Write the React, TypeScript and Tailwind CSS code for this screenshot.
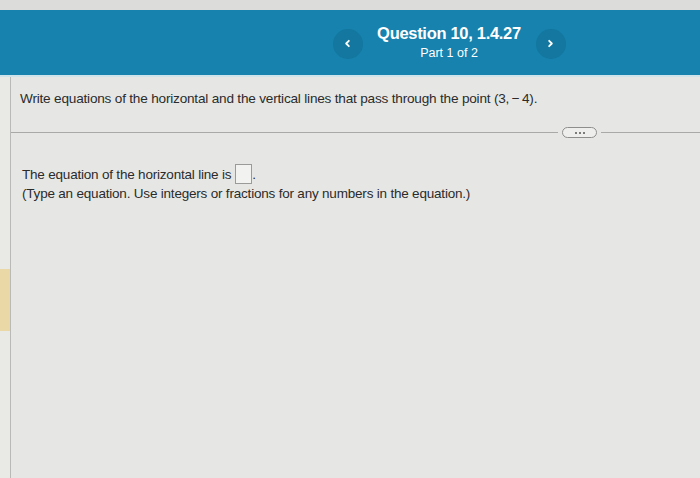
import React from 'react';

const App: React.FC = () => {
  return (
    <div
      className="w-[700px] h-[478px] overflow-hidden flex flex-col bg-[#e6e7e4] text-[#2b2b2b]"
      style={{ fontFamily: '"Liberation Sans", Arial, sans-serif' }}
    >
      {/* top strip */}
      <div className="h-[10px] bg-[#dcdddb]" />

      {/* header */}
      <header className="h-[65px] bg-[#1682ad] flex items-center justify-center relative">
        <div className="flex items-center gap-[13px] ml-[198px]">
          <button className="w-[30px] h-[30px] rounded-full bg-[#13779f] flex items-center justify-center text-white mt-[2px]">
            <svg width="9" height="9" viewBox="0 0 10 10" fill="none" stroke="white" strokeWidth="2" strokeLinecap="round" strokeLinejoin="round">
              <path d="M6.5 2 3.5 5l3 3" />
            </svg>
          </button>
          <div className="flex flex-col items-center text-white w-[147px]">
            <div className="text-[16.5px] font-bold tracking-[-0.3px] leading-[20px]">Question 10, 1.4.27</div>
            <div className="text-[12.5px] leading-[18px] mt-[1px]">Part 1 of 2</div>
          </div>
          <button className="w-[30px] h-[30px] rounded-full bg-[#13779f] flex items-center justify-center text-white mt-[2px]">
            <svg width="9" height="9" viewBox="0 0 10 10" fill="none" stroke="white" strokeWidth="2" strokeLinecap="round" strokeLinejoin="round">
              <path d="M3.5 2 6.5 5l-3 3" />
            </svg>
          </button>
        </div>
      </header>
      <div className="h-[2px] bg-[#cfe3ea]" />

      {/* body */}
      <div className="flex flex-1">
        <div className="w-[10px] flex flex-col bg-[#e9e9e6]">
          <div className="h-[192px]" />
          <div className="h-[62px] bg-[#ead9a6]" />
        </div>
        <div className="w-[1px] bg-[#b9bab8]" />
        <div className="flex-1 flex flex-col">
          <p className="text-[13.6px] tracking-[-0.2px] pl-[9px] pt-[12px] leading-[19px]">
            Write equations of the horizontal and the vertical lines that pass through the point (3,&thinsp;&minus;&thinsp;4).
          </p>
          <div className="flex items-center mt-[19px]">
            <div className="w-[547px] h-[1px] bg-[#a9aaa8]" />
            <div className="mx-[4px] w-[35px] h-[11px] rounded-full border border-[#8e8f8d] bg-[#eeeeec] flex items-center justify-center gap-[2px]">
              <span className="w-[2px] h-[2px] rounded-full bg-[#555]" />
              <span className="w-[2px] h-[2px] rounded-full bg-[#555]" />
              <span className="w-[2px] h-[2px] rounded-full bg-[#555]" />
            </div>
            <div className="flex-1 h-[1px] bg-[#a9aaa8]" />
          </div>
          <div className="pl-[11px] pt-[26px] text-[13.5px] tracking-[-0.2px] leading-[19px]">
            <div className="flex items-center">
              <span>The equation of the horizontal line is</span>
              <span className="ml-[4px] w-[17px] h-[20px] border border-[#9a9b99] bg-[#f2f2f0] inline-block" />
              <span>.</span>
            </div>
            <div>(Type an equation. Use integers or fractions for any numbers in the equation.)</div>
          </div>
        </div>
      </div>
    </div>
  );
};

export default App;
